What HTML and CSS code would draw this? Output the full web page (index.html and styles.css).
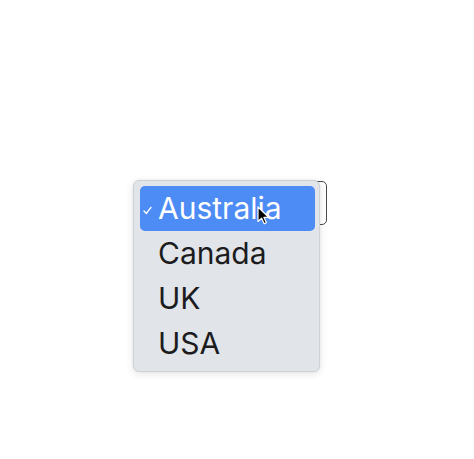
FILE: index.html
```html
<!DOCTYPE html>
<html>
<head>
<meta charset="utf-8">
<link rel="stylesheet" href="styles.css">
</head>
<body>
<div class="stage">
  <div class="select-wrap">
    <div class="select"></div>
    <ul class="menu">
      <li class="item selected">
        <span class="check"><svg width="9" height="9" viewBox="0 0 9 9"><path d="M1 5 L3.4 7.4 L8 1.4" fill="none" stroke="#fff" stroke-width="1.4" stroke-linecap="round" stroke-linejoin="round"/></svg></span>
        <span class="label">Australia</span>
      </li>
      <li class="item"><span class="check"></span><span class="label">Canada</span></li>
      <li class="item"><span class="check"></span><span class="label">UK</span></li>
      <li class="item"><span class="check"></span><span class="label">USA</span></li>
    </ul>
    <svg class="cursor" width="13" height="19" viewBox="0 0 13 19"><path d="M1 1 L1 15.5 L4.6 12.2 L7.2 17.8 L9.4 16.8 L6.9 11.3 L11.6 11.3 Z" fill="#000" stroke="#fff" stroke-width="1.2" stroke-linejoin="round"/></svg>
  </div>
</div>
</body>
</html>
```

FILE: styles.css
```css
html, body {
  margin: 0;
  padding: 0;
  background: #ffffff;
}

.stage {
  box-sizing: border-box;
  min-height: 459px;
  padding-top: 181px;
  padding-left: 143px;
}

.select-wrap {
  position: relative;
  width: 184px;
}

.select {
  box-sizing: border-box;
  height: 44px;
  border: 1.5px solid #4a4a4a;
  border-radius: 5px;
  background: #fff;
}

.menu {
  position: absolute;
  left: -10px;
  top: -1px;
  box-sizing: border-box;
  width: 187px;
  margin: 0;
  padding: 5px 4px 5px 6px;
  list-style: none;
  background: #e1e4e8;
  border: 1px solid #cfd1d4;
  border-radius: 6px;
  box-shadow: 0 2px 8px rgba(0, 0, 0, 0.10), 0 0 2px rgba(0, 0, 0, 0.08);
}

.item {
  display: flex;
  align-items: center;
  height: 45px;
  box-sizing: border-box;
  padding-bottom: 1px;
  font-family: Inter, "Liberation Sans", Arial, sans-serif;
  font-size: 30px;
  line-height: 42px;
  color: #1c1c1e;
  border-radius: 5px;
}

.item.selected {
  background: #4d8bf5;
  color: #ffffff;
}

.check {
  display: flex;
  align-items: center;
  width: 18px;
  height: 42px;
  padding-left: 3px;
  box-sizing: border-box;
  padding-top: 4px;
}

.label {
  white-space: nowrap;
}

.cursor {
  position: absolute;
  left: 114px;
  top: 25px;
}
```
